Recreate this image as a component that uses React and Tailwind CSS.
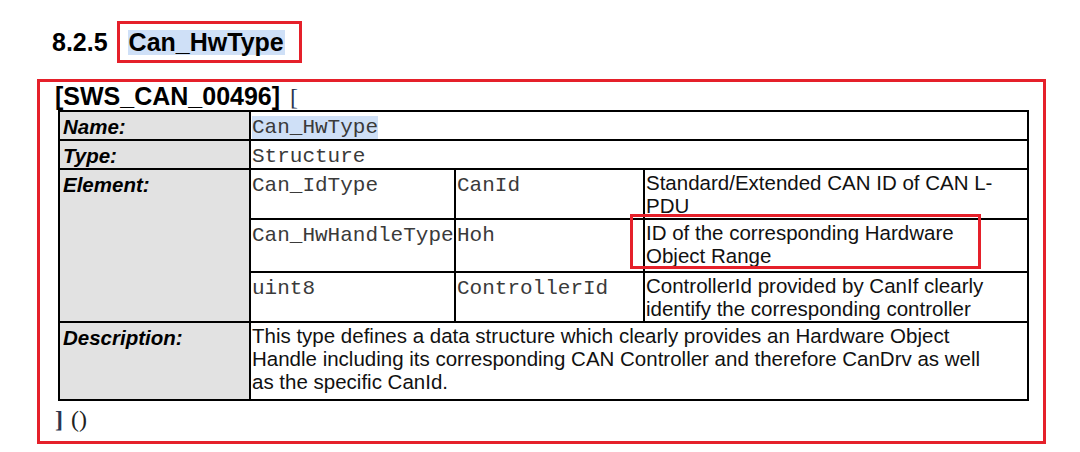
import React from "react";

const sans = "font-['Liberation_Sans',Arial,sans-serif]";
const mono = "font-['Liberation_Mono','Courier_New',monospace]";

function Label({ children }) {
  return (
    <td className={`border-2 border-black bg-[#e2e2e2] align-top px-[3px] pt-[3px] ${sans} text-[20.5px] leading-[23px] font-bold italic text-black`}>
      {children}
    </td>
  );
}

function MonoCell({ children, colSpan }) {
  return (
    <td colSpan={colSpan} className={`border-2 border-black align-top px-[1px] pt-[4px] ${mono} text-[21px] leading-[23px] text-[#3a3a3a] whitespace-nowrap overflow-visible`}>
      {children}
    </td>
  );
}

function TextCell({ children, colSpan }) {
  return (
    <td colSpan={colSpan} className={`border-2 border-black align-top pl-[1px] pr-[20px] pt-[1px] ${sans} text-[20.5px] leading-[23px] text-[#111]`}>
      {children}
    </td>
  );
}

export default function App() {
  return (
    <div className={`relative w-[1080px] h-[452px] bg-white overflow-hidden ${sans} text-black`}>
      <div className="flex items-center pt-[21px] pl-[52px]">
        <span className="text-[25px] font-bold leading-[30px]">8.2.5</span>
        <div className="ml-[9px] border-[3px] border-[#e5202a] h-[42px] w-[185px] pl-[8px] pt-[6px]">
          <span className="inline-block bg-[#cfe0f7] text-[25px] font-bold leading-[25px] px-[1px] h-[25px]">Can_HwType</span>
        </div>
      </div>

      <div className="ml-[37px] mt-[16px] w-[1009px] h-[365px] border-[3px] border-[#e5202a] pl-[15px]">
        <div className="h-[28px] leading-[28px] flex items-baseline">
          <span className="text-[25px] font-bold">[SWS_CAN_00496]</span>
          <span className="ml-[10px] text-[24px] font-['Liberation_Serif',serif] text-[#2b3550]">[</span>
        </div>
        <table className="ml-[3px] border-collapse table-fixed w-[969px]">
          <colgroup>
            <col className="w-[191px]" />
            <col className="w-[205px]" />
            <col className="w-[189px]" />
            <col className="w-[384px]" />
          </colgroup>
          <tbody>
            <tr className="h-[29px]">
              <Label>Name:</Label>
              <MonoCell colSpan={3}>
                <span className="bg-[#cfe0f7]">Can_HwType</span>
              </MonoCell>
            </tr>
            <tr className="h-[27px]">
              <Label>Type:</Label>
              <MonoCell colSpan={3}>Structure</MonoCell>
            </tr>
            <tr className="h-[50px]">
              <td rowSpan={3} className={`border-2 border-black bg-[#e2e2e2] align-top px-[3px] pt-[3px] ${sans} text-[20.5px] leading-[23px] font-bold italic`}>
                Element:
              </td>
              <MonoCell>Can_IdType</MonoCell>
              <MonoCell>CanId</MonoCell>
              <TextCell>Standard/Extended CAN ID of CAN L-PDU</TextCell>
            </tr>
            <tr className="h-[53px]">
              <MonoCell>Can_HwHandleType</MonoCell>
              <MonoCell>Hoh</MonoCell>
              <TextCell>ID of the corresponding Hardware Object Range</TextCell>
            </tr>
            <tr className="h-[50px]">
              <MonoCell>uint8</MonoCell>
              <MonoCell>ControllerId</MonoCell>
              <TextCell>ControllerId provided by CanIf clearly identify the corresponding controller</TextCell>
            </tr>
            <tr className="h-[78px]">
              <Label>Description:</Label>
              <TextCell colSpan={3}>
                This type defines a data structure which clearly provides an Hardware Object Handle including its corresponding CAN Controller and therefore CanDrv as well as the specific CanId.
              </TextCell>
            </tr>
          </tbody>
        </table>
        <div className="mt-[4px] flex items-baseline font-['Liberation_Serif',serif] text-[24px] leading-[28px] text-[#222]">
          <span className="font-bold text-[#2b3550]">]</span>
          <span className="ml-[8px]">()</span>
        </div>
      </div>

      <div className="absolute left-[630px] top-[214px] w-[351px] h-[55px] border-[3px] border-[#e5202a]" />
    </div>
  );
}
